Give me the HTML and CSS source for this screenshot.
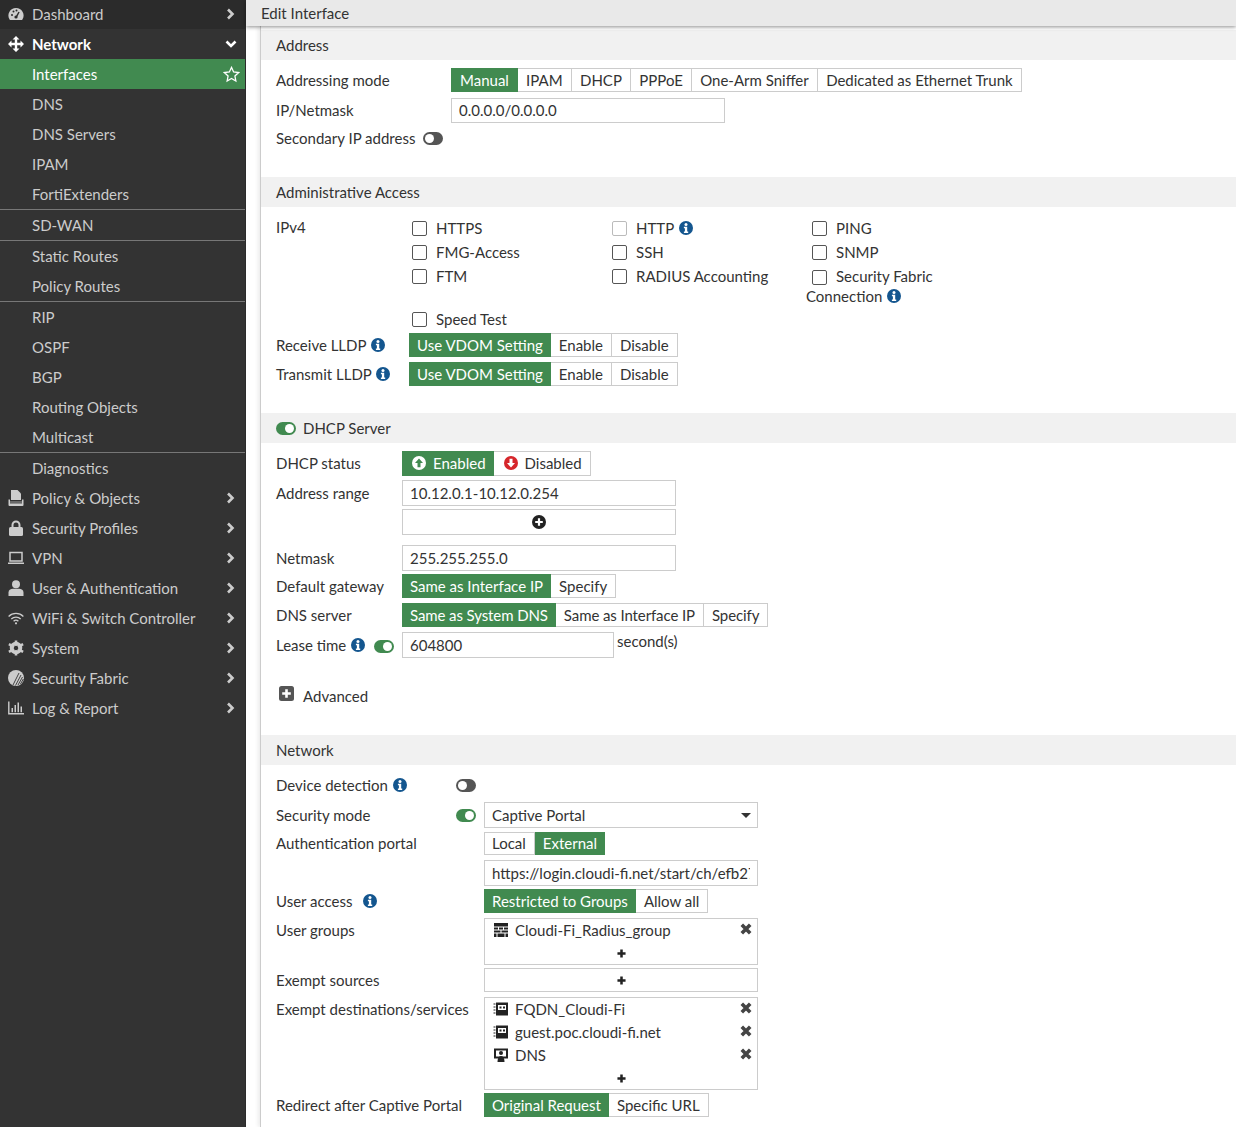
FILE: index.html
```html
<!DOCTYPE html>
<html lang="en">
<head>
    <meta charset="UTF-8">
    <title>Edit Interface</title>
    <link rel="stylesheet" href="styles.css">
</head>
<body>

    <!-- Shared icons -->
    <svg class="sprite" width="0" height="0">
        <symbol id="i-info" viewBox="0 0 14 14">
            <circle cx="7" cy="7" r="7" fill="#14568f"/>
            <circle cx="7" cy="3.4" r="1.5" fill="#fff"/>
            <path d="M4.9 5.7h3.3v4.7h1v1.5H4.9v-1.5h1V7.200h-1z" fill="#fff"/>
        </symbol>
        <symbol id="i-right" viewBox="0 0 10 12">
            <path d="M2 1.500 6.500 6 2 10.500" fill="none" stroke="currentColor" stroke-width="2.600"/>
        </symbol>
        <symbol id="i-remove" viewBox="0 0 12 12">
            <path d="M1.800 1.800l8.400 8.400M10.200 1.800l-8.400 8.400" stroke="#444" stroke-width="3.600"/>
        </symbol>
        <symbol id="i-plus" viewBox="0 0 10 10">
            <path d="M5 .5v9M.5 5h9" stroke="#222" stroke-width="2.800"/>
        </symbol>
        <symbol id="i-address" viewBox="0 0 16 16">
            <path d="M3 1.500h12v13H3z" fill="#222"/>
            <path d="M5 4h8v5H5z" fill="#fff"/>
            <path d="M6.500 5.500h2v2h-2zM10 5.500h2v2h-2z" fill="#222"/>
            <path d="M.5 3h2M.5 6h2M.5 9h2M.5 12h2" stroke="#222"/>
        </symbol>
    </svg>

    <div class="layout">
        <!-- Left navigation -->
        <nav class="sidebar">
            <a class="nav-item nav-first">
                <svg class="nav-icon" viewBox="0 0 16 16"><path d="M8 2a7.500 7.500 0 0 0-6.500 11.300l.4.700h12.200l.4-.7A7.500 7.500 0 0 0 8 2z" fill="currentColor"/><path d="M8 11.500 11 6" stroke="#2b2b2b" stroke-width="1.500"/><circle cx="8" cy="11" r="1.600" fill="#2b2b2b"/><circle cx="4" cy="9" r="1" fill="#2b2b2b"/><circle cx="5.500" cy="5.500" r="1" fill="#2b2b2b"/><circle cx="8.500" cy="4.500" r="1" fill="#2b2b2b"/></svg>
                <span>Dashboard</span>
                <svg class="nav-arrow"><use href="#i-right"/></svg>
            </a>
            <a class="nav-item nav-open">
                <svg class="nav-icon" viewBox="0 0 16 16"><path d="M8 0l3.500 3.500H9.200v3.300h3.300V4.500L16 8l-3.500 3.500V9.200H9.200v3.300h2.300L8 16l-3.500-3.500h2.300V9.200H3.500v2.300L0 8l3.500-3.500v2.300h3.300V3.500H4.500z" fill="#fff"/></svg>
                <span>Network</span>
                <svg class="nav-arrow nav-arrow-down" viewBox="0 0 12 10"><path d="M1.500 2.500 6 7l4.500-4.500" fill="none" stroke="#fff" stroke-width="2.600"/></svg>
            </a>
            <a class="nav-item nav-sub nav-active">
                <span>Interfaces</span>
                <svg class="nav-star" viewBox="0 0 16 16"><path d="M8 1.300l2 4.300 4.700.6-3.500 3.200.9 4.700L8 11.800l-4.100 2.300.9-4.700L1.300 6.200 6 5.600z" fill="none" stroke="#fff" stroke-width="1.200"/></svg>
            </a>
            <a class="nav-item nav-sub">DNS</a>
            <a class="nav-item nav-sub">DNS Servers</a>
            <a class="nav-item nav-sub">IPAM</a>
            <a class="nav-item nav-sub nav-end">FortiExtenders</a>
            <a class="nav-item nav-sub nav-end">SD-WAN</a>
            <a class="nav-item nav-sub">Static Routes</a>
            <a class="nav-item nav-sub nav-end">Policy Routes</a>
            <a class="nav-item nav-sub">RIP</a>
            <a class="nav-item nav-sub">OSPF</a>
            <a class="nav-item nav-sub">BGP</a>
            <a class="nav-item nav-sub">Routing Objects</a>
            <a class="nav-item nav-sub nav-end">Multicast</a>
            <a class="nav-item nav-sub">Diagnostics</a>
            <a class="nav-item">
                <svg class="nav-icon" viewBox="0 0 16 16"><path d="M3 0h6.500L13 3.500V10H3z" fill="currentColor"/><path d="M.5 9.500H2v4h12v-4h1.500V15a1 1 0 0 1-1 1h-13a1 1 0 0 1-1-1z" fill="currentColor"/><path d="M2 11h12v2.500H2z" fill="currentColor" opacity=".35"/></svg>
                <span>Policy &amp; Objects</span>
                <svg class="nav-arrow"><use href="#i-right"/></svg>
            </a>
            <a class="nav-item">
                <svg class="nav-icon" viewBox="0 0 16 16"><path d="M4.500 7V5a3.500 3.500 0 0 1 7 0v2" fill="none" stroke="currentColor" stroke-width="2"/><rect x="1" y="7" width="14" height="9" rx="1.500" fill="currentColor"/></svg>
                <span>Security Profiles</span>
                <svg class="nav-arrow"><use href="#i-right"/></svg>
            </a>
            <a class="nav-item">
                <svg class="nav-icon" viewBox="0 0 16 16"><rect x="2" y="2.500" width="12" height="8.500" fill="none" stroke="currentColor" stroke-width="1.500"/><path d="M0 12.500h16V14H0z" fill="currentColor"/></svg>
                <span>VPN</span>
                <svg class="nav-arrow"><use href="#i-right"/></svg>
            </a>
            <a class="nav-item">
                <svg class="nav-icon" viewBox="0 0 16 16"><circle cx="8" cy="4.300" r="4" fill="currentColor"/><path d="M.5 16v-3.500C.5 10 2.500 8.800 5 8.800h6c2.500 0 4.500 1.200 4.500 3.700V16z" fill="currentColor"/></svg>
                <span>User &amp; Authentication</span>
                <svg class="nav-arrow"><use href="#i-right"/></svg>
            </a>
            <a class="nav-item">
                <svg class="nav-icon" viewBox="0 0 16 16"><path d="M.6 6.500a10.500 10.500 0 0 1 14.800 0M3.300 9a6.800 6.800 0 0 1 9.400 0M5.600 11.300a3.400 3.400 0 0 1 4.800 0" fill="none" stroke="currentColor" stroke-width="1.300"/><circle cx="8" cy="13.300" r="1.100" fill="currentColor"/></svg>
                <span>WiFi &amp; Switch Controller</span>
                <svg class="nav-arrow"><use href="#i-right"/></svg>
            </a>
            <a class="nav-item">
                <svg class="nav-icon" viewBox="0 0 16 16"><circle cx="8" cy="8" r="4.500" fill="none" stroke="currentColor" stroke-width="3.500"/><path d="M8 .5v15M.9 4.200l14.200 7.600M.9 11.800l14.200-7.600" stroke="currentColor" stroke-width="2.600"/><circle cx="8" cy="8" r="2.200" fill="#333"/></svg>
                <span>System</span>
                <svg class="nav-arrow"><use href="#i-right"/></svg>
            </a>
            <a class="nav-item">
                <svg class="nav-icon" viewBox="0 0 16 16"><circle cx="8" cy="8" r="8" fill="currentColor"/><path d="M5 15 11 3M7.500 15.500 13 5M10 15l4.500-8M12.500 14l2.800-5" stroke="#333" stroke-width=".9"/></svg>
                <span>Security Fabric</span>
                <svg class="nav-arrow"><use href="#i-right"/></svg>
            </a>
            <a class="nav-item">
                <svg class="nav-icon" viewBox="0 0 16 16"><path d="M.8 1.500v12.300H16" fill="none" stroke="currentColor" stroke-width="1.400"/><path d="M3.500 8h1.500v4.300H3.500zM6.500 5h1.500v7.300H6.500zM9.500 2.500H11v9.800H9.500zM12.500 6.500H14v5.800h-1.500z" fill="currentColor"/></svg>
                <span>Log &amp; Report</span>
                <svg class="nav-arrow"><use href="#i-right"/></svg>
            </a>
        </nav>

        <main class="main">
            <header class="page-title">Edit Interface</header>

            <div class="panel">
                <!-- Address -->
                <section class="section section-address">
                    <h3 class="section-head">Address</h3>
                    <div class="row row-first">
                        <label class="label label-address">Addressing mode</label>
                        <div class="btn-group btn-group-mode">
                            <span class="btn on">Manual</span>
                            <span class="btn">IPAM</span>
                            <span class="btn">DHCP</span>
                            <span class="btn">PPPoE</span>
                            <span class="btn">One-Arm Sniffer</span>
                            <span class="btn">Dedicated as Ethernet Trunk</span>
                        </div>
                    </div>
                    <div class="row row-gap6 row-ip">
                        <label class="label label-address">IP/Netmask</label>
                        <div class="field field-ip">0.0.0.0/0.0.0.0</div>
                    </div>
                    <div class="row row-gap3">
                        <label class="label">Secondary IP address</label>
                        <span class="toggle toggle-off toggle-after"></span>
                    </div>
                </section>

                <!-- Administrative Access -->
                <section class="section section-admin">
                    <h3 class="section-head">Administrative Access</h3>
                    <div class="access">
                        <label class="label label-access">IPv4</label>
                        <div class="access-grid">
                            <div class="check"><span class="box"></span>HTTPS</div>
                            <div class="check"><span class="box box-off"></span>HTTP <svg class="info"><use href="#i-info"/></svg></div>
                            <div class="check"><span class="box"></span>PING</div>
                            <div class="check"><span class="box"></span>FMG-Access</div>
                            <div class="check"><span class="box"></span>SSH</div>
                            <div class="check"><span class="box"></span>SNMP</div>
                            <div class="check"><span class="box"></span>FTM</div>
                            <div class="check"><span class="box"></span>RADIUS Accounting</div>
                            <div class="check check-wrap"><span class="box"></span>Security Fabric<br>Connection <svg class="info"><use href="#i-info"/></svg></div>
                            <div class="check check-last"><span class="box"></span>Speed Test</div>
                        </div>
                    </div>
                    <div class="row row-lldp">
                        <label class="label label-lldp">Receive LLDP <svg class="info"><use href="#i-info"/></svg></label>
                        <div class="btn-group">
                            <span class="btn on">Use VDOM Setting</span>
                            <span class="btn">Enable</span>
                            <span class="btn">Disable</span>
                        </div>
                    </div>
                    <div class="row row-gap5">
                        <label class="label label-lldp">Transmit LLDP <svg class="info"><use href="#i-info"/></svg></label>
                        <div class="btn-group">
                            <span class="btn on">Use VDOM Setting</span>
                            <span class="btn">Enable</span>
                            <span class="btn">Disable</span>
                        </div>
                    </div>
                </section>

                <!-- DHCP Server -->
                <section class="section section-dhcp">
                    <h3 class="section-head"><span class="toggle toggle-on toggle-before"></span>DHCP Server</h3>
                    <div class="row row-first row-status">
                        <label class="label label-dhcp">DHCP status</label>
                        <div class="btn-group btn-group-tall">
                            <span class="btn on">
                                <svg class="status-icon" viewBox="0 0 14 14"><circle cx="7" cy="7" r="7" fill="#fff"/><path d="M7 2.500 11 7H8.500v4.200h-3V7H3z" fill="#418a50"/></svg>
                                Enabled
                            </span>
                            <span class="btn">
                                <svg class="status-icon" viewBox="0 0 14 14"><circle cx="7" cy="7" r="7" fill="#d6262b"/><path d="M7 11.500 3 7h2.500V2.800h3V7H11z" fill="#fff"/></svg>
                                Disabled
                            </span>
                        </div>
                    </div>
                    <div class="row row-gap4">
                        <label class="label label-dhcp">Address range</label>
                        <div class="field field-range">10.12.0.1-10.12.0.254</div>
                    </div>
                    <div class="row row-gap3">
                        <label class="label label-dhcp"></label>
                        <div class="field field-range field-center">
                            <svg class="add-icon" viewBox="0 0 14 14"><circle cx="7" cy="7" r="7" fill="#222"/><path d="M7 3.200v7.600M3.200 7h7.600" stroke="#fff" stroke-width="2.200"/></svg>
                        </div>
                    </div>
                    <div class="row row-gap10">
                        <label class="label label-dhcp">Netmask</label>
                        <div class="field field-range">255.255.255.0</div>
                    </div>
                    <div class="row row-gap3">
                        <label class="label label-dhcp">Default gateway</label>
                        <div class="btn-group">
                            <span class="btn on">Same as Interface IP</span>
                            <span class="btn">Specify</span>
                        </div>
                    </div>
                    <div class="row row-gap5">
                        <label class="label label-dhcp">DNS server</label>
                        <div class="btn-group btn-group-dns">
                            <span class="btn on">Same as System DNS</span>
                            <span class="btn">Same as Interface IP</span>
                            <span class="btn">Specify</span>
                        </div>
                    </div>
                    <div class="row row-gap5 row-lease">
                        <label class="label label-dhcp">Lease time <svg class="info"><use href="#i-info"/></svg><span class="toggle toggle-on toggle-lease"></span></label>
                        <div class="field field-lease">604800</div>
                        <span class="unit">second(s)</span>
                    </div>
                    <div class="advanced">
                        <svg class="advanced-icon" viewBox="0 0 15 15"><rect width="15" height="15" rx="2.500" fill="#555"/><path d="M7.500 3.200v8.600M3.200 7.500h8.600" stroke="#fff" stroke-width="2.600"/></svg>
                        <span>Advanced</span>
                    </div>
                </section>

                <!-- Network -->
                <section class="section">
                    <h3 class="section-head">Network</h3>
                    <div class="row row-device">
                        <label class="label label-net">Device detection <svg class="info"><use href="#i-info"/></svg></label>
                        <span class="toggle toggle-off toggle-net"></span>
                    </div>
                    <div class="row row-security">
                        <label class="label label-net">Security mode</label>
                        <span class="toggle toggle-on toggle-net"></span>
                        <div class="field field-net field-select">Captive Portal<span class="caret"></span></div>
                    </div>
                    <div class="row row-gap4 row-auth">
                        <label class="label label-net">Authentication portal</label>
                        <div class="btn-group btn-group-short">
                            <span class="btn">Local</span>
                            <span class="btn on">External</span>
                        </div>
                    </div>
                    <div class="row row-gap5">
                        <label class="label label-net"></label>
                        <div class="field field-net"><div class="field-clip">https://login.cloudi-fi.net/start/ch/efb27</div></div>
                    </div>
                    <div class="row row-gap3">
                        <label class="label label-net">User access <svg class="info info-far"><use href="#i-info"/></svg></label>
                        <div class="btn-group">
                            <span class="btn on">Restricted to Groups</span>
                            <span class="btn">Allow all</span>
                        </div>
                    </div>
                    <div class="row row-gap5 row-top">
                        <label class="label label-net">User groups</label>
                        <div class="picker">
                            <div class="picker-item">
                                <svg class="item-icon" viewBox="0 0 16 16"><path d="M1 1h14v14H1z" fill="#222"/><path d="M1 5h14M1 8h14M1 11h14M5.500 5v3M10.500 5v3M8 8v3M4 11v4M12 11v4" stroke="#fff" stroke-width="1"/></svg>
                                <span>Cloudi-Fi_Radius_group</span>
                                <svg class="item-remove"><use href="#i-remove"/></svg>
                            </div>
                            <div class="picker-add"><svg class="plus"><use href="#i-plus"/></svg></div>
                        </div>
                    </div>
                    <div class="row row-gap3 row-top">
                        <label class="label label-net">Exempt sources</label>
                        <div class="picker">
                            <div class="picker-add"><svg class="plus"><use href="#i-plus"/></svg></div>
                        </div>
                    </div>
                    <div class="row row-gap5 row-top">
                        <label class="label label-net">Exempt destinations/services</label>
                        <div class="picker">
                            <div class="picker-item">
                                <svg class="item-icon"><use href="#i-address"/></svg>
                                <span>FQDN_Cloudi-Fi</span>
                                <svg class="item-remove"><use href="#i-remove"/></svg>
                            </div>
                            <div class="picker-item">
                                <svg class="item-icon"><use href="#i-address"/></svg>
                                <span>guest.poc.cloudi-fi.net</span>
                                <svg class="item-remove"><use href="#i-remove"/></svg>
                            </div>
                            <div class="picker-item">
                                <svg class="item-icon" viewBox="0 0 16 16"><path d="M1 1.500h14v10H1z" fill="#222"/><path d="M3 3.500h10v6H3z" fill="#fff"/><circle cx="8" cy="6" r="2" fill="#222"/><path d="M4.500 15c0-3 1-6 3.500-6s3.500 3 3.500 6z" fill="#222"/></svg>
                                <span>DNS</span>
                                <svg class="item-remove"><use href="#i-remove"/></svg>
                            </div>
                            <div class="picker-add"><svg class="plus"><use href="#i-plus"/></svg></div>
                        </div>
                    </div>
                    <div class="row row-gap3">
                        <label class="label label-net">Redirect after Captive Portal</label>
                        <div class="btn-group">
                            <span class="btn on">Original Request</span>
                            <span class="btn">Specific URL</span>
                        </div>
                    </div>
                </section>
            </div>
        </main>
    </div>

</body>
</html>
```

FILE: styles.css
```css
/* Global Styling */
* {
    margin: 0;
    padding: 0;
    box-sizing: border-box;
}

html, body {
    height: 1127px;
    overflow: hidden;
}

body {
    font-family: 'Lato', 'Liberation Sans', sans-serif;
    font-size: 15px;
    color: #333;
    background: #fff;
}

.sprite {
    position: absolute;
}

.layout {
    display: flex;
    height: 1127px;
}

/* Sidebar */
.sidebar {
    width: 246px;
    flex-shrink: 0;
    background: #333;
    color: #ccc;
    border-right: 1px solid #2b2b2b;
}

.nav-item {
    display: flex;
    align-items: center;
    height: 30px;
    padding: 0 9px 0 8px;
}

.nav-first {
    height: 29px;
    padding-bottom: 2px;
    background: #2b2b2b;
}

.nav-open {
    color: #fff;
    font-weight: 700;
}

.nav-sub {
    padding-left: 32px;
}

.nav-active {
    background: #418a50;
    color: #fff;
}

.nav-end {
    height: 31px;
    border-bottom: 1px solid #777;
}

.nav-icon {
    width: 16px;
    height: 16px;
    margin-right: 8px;
    flex-shrink: 0;
}

.nav-arrow {
    width: 10px;
    height: 12px;
    margin-left: auto;
}

.nav-arrow-down {
    width: 12px;
    height: 10px;
    margin-right: -1px;
}

.nav-star {
    width: 17px;
    height: 17px;
    margin-left: auto;
    margin-right: -4px;
}

/* Main */
.main {
    flex: 1;
    min-width: 0;
    display: flex;
    flex-direction: column;
}

.page-title {
    height: 26px;
    padding-left: 15px;
    line-height: 27px;
    background: #e9e9e9;
    box-shadow: 0 1px 4px rgba(0, 0, 0, 0.45);
    position: relative;
}

.panel {
    flex: 1;
    margin-left: 14px;
    padding-top: 4px;
    border-left: 1px solid #ccc;
    box-shadow: -2px 0 4px rgba(0, 0, 0, 0.08);
    overflow: hidden;
}

.section-address {
    height: 147px;
}

.section-admin {
    height: 236px;
}

.section-dhcp {
    height: 322px;
}

.section-head {
    display: flex;
    align-items: center;
    height: 30px;
    padding-left: 15px;
    font-size: 15px;
    font-weight: 400;
    background: #f1f1f1;
}

/* Rows */
.row {
    display: flex;
    align-items: center;
    padding-left: 15px;
    min-height: 24px;
}

.row-first {
    margin-top: 8px;
}

.row-gap3 {
    margin-top: 3px;
}

.row-gap4 {
    margin-top: 4px;
}

.row-gap5 {
    margin-top: 5px;
}

.row-gap6 {
    margin-top: 6px;
}

.row-gap10 {
    margin-top: 10px;
}

.row-top {
    align-items: flex-start;
}

.row-top .label {
    line-height: 24px;
}

.row-ip .label {
    padding-bottom: 2px;
}

.row-status,
.row-auth {
    align-items: flex-start;
}

.row-status .label {
    line-height: 24px;
}

.row-auth .label {
    line-height: 22px;
}

.label {
    flex-shrink: 0;
}

.label-address {
    width: 175px;
}

.label-lldp {
    width: 133px;
}

.label-dhcp {
    width: 126px;
}

.label-net {
    width: 208px;
}

.label-access {
    width: 130px;
}

.info {
    width: 14px;
    height: 14px;
    vertical-align: -1px;
    margin-left: 1px;
    flex-shrink: 0;
}

.info-far {
    margin-left: 7px;
}

/* Toggle */
.toggle {
    display: inline-block;
    position: relative;
    width: 20px;
    height: 13px;
    border-radius: 7px;
    flex-shrink: 0;
}

.toggle::after {
    content: "";
    position: absolute;
    top: 2px;
    width: 9px;
    height: 9px;
    border-radius: 50%;
    background: #fff;
}

.toggle-on {
    background: #418a50;
}

.toggle-on::after {
    right: 2px;
}

.toggle-off {
    background: #555;
}

.toggle-off::after {
    left: 2px;
}

.toggle-after {
    margin-left: 8px;
}

.toggle-before {
    margin-right: 7px;
}

.toggle-lease {
    margin-left: 9px;
    vertical-align: -2px;
}

.toggle-net {
    margin-left: -28px;
    margin-right: 8px;
}

/* Buttons */
.btn-group {
    display: flex;
    height: 24px;
}

.btn-group-tall {
    height: 25px;
}

.btn-group-tall .btn,
.btn-group-short .btn {
    padding-bottom: 1px;
}

.btn-group-short {
    height: 23px;
}

.btn {
    display: flex;
    align-items: center;
    padding: 0 8px;
    border: 1px solid #ccc;
    border-left: 0;
    white-space: nowrap;
}

.btn:first-child {
    padding-left: 7px;
    border-left: 1px solid #ccc;
}

.btn.on {
    padding-left: 8px;
    padding-right: 8px;
    background: #418a50;
    border: 0;
    color: #fff;
}

.btn-group-mode .btn {
    padding: 0 8.2px;
}

.btn-group-mode .btn.on {
    padding: 0 9px;
}

.btn-group-dns {
    letter-spacing: -0.1px;
}

.status-icon {
    width: 14px;
    height: 14px;
    margin: 0 7px 0 2px;
}

/* Fields */
.field {
    height: 26px;
    padding: 0 7px;
    border: 1px solid #ccc;
    line-height: 25px;
    white-space: nowrap;
}

.field-clip {
    overflow: hidden;
}

.field-ip {
    width: 274px;
    height: 25px;
    line-height: 22px;
}

.field-range {
    width: 274px;
}

.field-center {
    display: flex;
    align-items: center;
    justify-content: center;
}

.add-icon {
    width: 14px;
    height: 14px;
}

.field-lease {
    width: 212px;
}

.field-net {
    width: 274px;
}

.field-select {
    position: relative;
}

.caret {
    position: absolute;
    right: 6px;
    top: 10px;
    border: 5px solid transparent;
    border-top-color: #333;
    border-bottom: 0;
}

.unit {
    margin-left: 3px;
    align-self: flex-start;
    line-height: 19px;
}

/* Administrative access checkboxes */
.access {
    display: flex;
    padding: 9px 0 0 15px;
}

.access .label {
    line-height: 22px;
}

.access-grid {
    display: grid;
    grid-template-columns: 200px 200px 200px;
    grid-auto-rows: 24px;
}

.check {
    display: flex;
    align-items: center;
    padding-left: 6px;
    white-space: nowrap;
}

.check .info {
    margin-left: 5px;
}

.check-wrap {
    display: block;
    padding: 2px 0 0;
    line-height: 20px;
}

.check-wrap .box {
    display: inline-block;
    vertical-align: -3px;
    margin-left: 6px;
}

.check-wrap .info {
    margin-left: 1px;
}

.check-last {
    grid-column: 1;
    grid-row: 4;
    height: 24px;
    margin-top: 19px;
}

.box {
    width: 15px;
    height: 15px;
    margin-right: 9px;
    border: 1px solid #555;
    border-radius: 2px;
    background: #fff;
}

.box-off {
    border-color: #bbb;
}

.row-lldp {
    margin-top: 21px;
}

/* Advanced */
.advanced {
    display: flex;
    align-items: center;
    margin: 29px 0 0 18px;
}

.advanced-icon {
    width: 15px;
    height: 15px;
    margin: -6px 9px 0 0;
}

/* Network section */
.row-device {
    margin-top: 8px;
}

.row-security {
    margin-top: 5px;
}

.row-auth {
    min-height: 23px;
}

.picker {
    width: 274px;
    border: 1px solid #ccc;
}

.picker-item {
    display: flex;
    align-items: center;
    height: 23px;
    padding: 0 5px 2px 9px;
}

.picker-add {
    display: flex;
    align-items: center;
    justify-content: center;
    height: 22px;
}

.plus {
    width: 9px;
    height: 9px;
}

.item-icon {
    width: 16px;
    height: 16px;
    margin-left: -1px;
    margin-right: 6px;
    flex-shrink: 0;
}

.item-remove {
    width: 12px;
    height: 12px;
    margin-left: auto;
    margin-top: -2px;
}
```
